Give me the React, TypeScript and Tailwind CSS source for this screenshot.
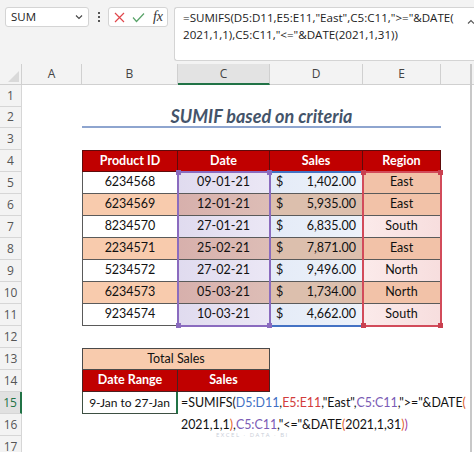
import React from "react";

const rows = [
  ["6234568", "09-01-21", "1,402.00", "East"],
  ["6234569", "12-01-21", "5,935.00", "East"],
  ["8234570", "27-01-21", "6,835.00", "South"],
  ["2234571", "25-02-21", "7,871.00", "East"],
  ["5234572", "27-02-21", "9,496.00", "North"],
  ["6234573", "05-03-21", "1,734.00", "North"],
  ["9234574", "10-03-21", "4,662.00", "South"],
];

const bodyRowStart = [
  "row-start-6",
  "row-start-7",
  "row-start-8",
  "row-start-9",
  "row-start-10",
  "row-start-11",
  "row-start-12",
];

const rowHeaderStart = [
  "row-start-2",
  "row-start-3",
  "row-start-4",
  "row-start-5",
  "row-start-6",
  "row-start-7",
  "row-start-8",
  "row-start-9",
  "row-start-10",
  "row-start-11",
  "row-start-12",
  "row-start-13",
  "row-start-14",
  "row-start-15",
  "row-start-16",
  "row-start-17",
  "row-start-18",
];

const eDark = [true, true, false, true, false, true, false];

function Handle({ pos, color }: { pos: string; color: string }) {
  return <div className={`absolute w-[5px] h-[5px] ${pos} ${color}`} />;
}

export default function App() {
  const cell = "font-['Lato',sans-serif] text-[12.5px] text-[#111] flex items-center border-b border-r border-[#5a5a5a]";
  return (
    <div className="w-[474px] h-[452px] overflow-hidden bg-white relative">
      {/* formula bar */}
      <div className="h-[64px] bg-[#f3f3f3] flex items-start pt-[7px] pl-[5px] font-['Open_Sans',sans-serif]">
        <div className="w-[84px] h-[20px] bg-white border border-[#d4d4d4] rounded-[3px] flex items-center justify-between pl-[5px] pr-[4px] text-[11.5px] text-[#222]">
          <span>SUM</span>
          <svg width="10" height="10" viewBox="0 0 10 10">
            <path d="M2 3.5 L5 6.5 L8 3.5" fill="none" stroke="#444" strokeWidth="1.1" />
          </svg>
        </div>
        <div className="w-[19px] h-[20px] flex flex-col items-center justify-center gap-[2px]">
          <div className="w-[2px] h-[2px] bg-[#555]" />
          <div className="w-[2px] h-[2px] bg-[#555]" />
          <div className="w-[2px] h-[2px] bg-[#555]" />
        </div>
        <div className="w-[60px] h-[20px] bg-white border border-[#d4d4d4] rounded-[3px] flex items-center justify-between pl-[5px] pr-[4px]">
          <svg width="11" height="11" viewBox="0 0 11 11">
            <path d="M1 1 L10 10 M10 1 L1 10" stroke="#e0474c" strokeWidth="1.2" />
          </svg>
          <svg width="13" height="11" viewBox="0 0 13 11">
            <path d="M1 5.5 L4.5 9.5 L12 1.5" fill="none" stroke="#5aa46a" strokeWidth="1.2" />
          </svg>
          <span className="font-['Liberation_Serif',serif] italic text-[14px] leading-none text-[#333]">fx</span>
        </div>
        <div className="ml-[6px] flex-1 h-[54px] bg-white border border-r-0 border-[#d4d4d4] rounded-l-[3px] pl-[8px] pt-[1px] text-[11.6px] leading-[17px] text-[#222] relative">
          <div>=SUMIFS(D5:D11,E5:E11,"East",C5:C11,"&gt;="&amp;DATE(</div>
          <div>2021,1,1),C5:C11,"&lt;="&amp;DATE(2021,1,31))</div>
          <svg className="absolute right-[-2px] top-[10px]" width="10" height="8" viewBox="0 0 10 8">
            <path d="M2 5.5 L5 2.5 L8 5.5" fill="none" stroke="#555" strokeWidth="1.1" />
          </svg>
        </div>
      </div>

      {/* sheet */}
      <div className="grid grid-cols-[22px_60px_96px_92px_93px_78px_29px_2px_1fr] grid-rows-[21px_22px_21px_22px_repeat(14,22px)] font-['Open_Sans',sans-serif]">
        {/* column headers */}
        <div className="col-start-1 row-start-1 bg-[#f3f3f3] border-r border-b border-[#d0d0d0] relative">
          <div className="absolute right-[2px] bottom-[2px] w-0 h-0 border-l-[11px] border-l-transparent border-b-[11px] border-b-[#d9d9d9]" />
        </div>
        <div className="col-start-2 row-start-1 bg-[#f3f3f3] border-r border-b border-[#d0d0d0] flex items-center justify-center text-[12px] text-[#444]">A</div>
        <div className="col-start-3 row-start-1 bg-[#f3f3f3] border-r border-b border-[#d0d0d0] flex items-center justify-center text-[12px] text-[#444]">B</div>
        <div className="col-start-4 row-start-1 bg-[#e3e3e3] border-r border-[#d0d0d0] border-b-2 border-b-[#217346] flex items-center justify-center text-[12px] text-[#444]">C</div>
        <div className="col-start-5 row-start-1 bg-[#f3f3f3] border-r border-b border-[#d0d0d0] flex items-center justify-center text-[12px] text-[#444]">D</div>
        <div className="col-start-6 row-start-1 bg-[#f3f3f3] border-r border-b border-[#d0d0d0] flex items-center justify-center text-[12px] text-[#444]">E</div>
        <div className="col-start-7 row-start-1 bg-[#f3f3f3] border-b border-[#d0d0d0]" />
        <div className="col-start-8 row-start-1 row-span-18 bg-[#c8c8c8]" />
        <div className="col-start-9 row-start-1 bg-[#f3f3f3] border-b border-[#d0d0d0]" />

        {/* row headers */}
        {rowHeaderStart.map((rs, i) =>
          i === 14 ? (
            <div key={i} className={`col-start-1 ${rs} bg-[#e1e1e1] border-b border-[#d6d6d6] border-r-2 border-r-[#217346] flex items-center justify-center text-[12px] text-[#217346]`}>
              {i + 1}
            </div>
          ) : (
            <div key={i} className={`col-start-1 ${rs} bg-[#f3f3f3] border-b border-r border-[#d6d6d6] flex items-center justify-center text-[12px] text-[#555]`}>
              {i + 1}
            </div>
          )
        )}

        {/* title */}
        <div className="col-start-3 col-span-4 row-start-3 border-b-2 border-[#8ea5cf] flex items-center justify-center font-['Lato',sans-serif] italic font-bold text-[18px] text-[#44546a]">
          SUMIF based on criteria
        </div>

        {/* table header */}
        <div className="col-start-3 row-start-5 bg-[#c00000] border border-[#5e0b0b] flex items-center justify-center font-['Lato',sans-serif] font-bold text-[12.5px] text-white">Product ID</div>
        <div className="col-start-4 row-start-5 bg-[#c00000] border-y border-r border-[#5e0b0b] flex items-center justify-center font-['Lato',sans-serif] font-bold text-[12.5px] text-white">Date</div>
        <div className="col-start-5 row-start-5 bg-[#c00000] border-y border-r border-[#5e0b0b] flex items-center justify-center font-['Lato',sans-serif] font-bold text-[12.5px] text-white">Sales</div>
        <div className="col-start-6 row-start-5 bg-[#c00000] border-y border-r border-[#5e0b0b] flex items-center justify-center font-['Lato',sans-serif] font-bold text-[12.5px] text-white">Region</div>

        {/* body */}
        {rows.map((r, i) => {
          const peach = i % 2 === 1;
          const rs = bodyRowStart[i];
          return (
            <React.Fragment key={i}>
              <div className={`col-start-3 ${rs} ${cell} border-l justify-center ${peach ? "bg-[#f8cbad]" : "bg-white"}`}>{r[0]}</div>
              <div className={`col-start-4 ${rs} ${cell} justify-center ${peach ? "bg-linear-to-r from-[#d7b0ac] to-[#ddbdb6]" : "bg-linear-to-r from-[#e0dbef] to-[#ebe7f5]"}`}>{r[1]}</div>
              <div className={`col-start-5 ${rs} ${cell} justify-between pl-[6px] pr-[6px] ${peach ? "bg-[#dcbfad]" : "bg-linear-to-r from-[#e4ebf7] to-[#edf2fa]"}`}>
                <span>$</span>
                <span>{r[2]}</span>
              </div>
              <div className={`col-start-6 ${rs} ${cell} justify-center ${eDark[i] ? "bg-[#f2c2a8]" : "bg-linear-to-r from-[#fbeaea] to-[#f7dede]"}`}>{r[3]}</div>
            </React.Fragment>
          );
        })}

        {/* range highlights */}
        <div className="col-start-5 row-start-6 row-span-7 -m-px border-2 border-[#4472c4] pointer-events-none" />
        <div className="col-start-4 row-start-6 row-span-7 -m-px border-2 border-[#8a6bbf] relative pointer-events-none">
          <Handle pos="-left-[3px] -top-[3px]" color="bg-[#8a6bbf]" />
          <Handle pos="-right-[3px] -top-[3px]" color="bg-[#8a6bbf]" />
          <Handle pos="-left-[3px] -bottom-[3px]" color="bg-[#8a6bbf]" />
          <Handle pos="-right-[3px] -bottom-[3px]" color="bg-[#8a6bbf]" />
        </div>
        <div className="col-start-6 row-start-6 row-span-7 -m-px border-2 border-[#d24b5a] relative pointer-events-none">
          <Handle pos="-left-[3px] -top-[3px]" color="bg-[#c9404f]" />
          <Handle pos="-right-[3px] -top-[3px]" color="bg-[#c9404f]" />
          <Handle pos="-left-[3px] -bottom-[3px]" color="bg-[#c9404f]" />
          <Handle pos="-right-[3px] -bottom-[3px]" color="bg-[#c9404f]" />
        </div>

        {/* total sales table */}
        <div className="col-start-3 col-span-2 row-start-14 bg-[#f8cbad] border border-[#4a4a4a] flex items-center justify-center font-['Lato',sans-serif] text-[12.5px] text-[#111]">Total Sales</div>
        <div className="col-start-3 row-start-15 bg-[#c00000] border-x border-b border-[#4a2020] flex items-center justify-center font-['Lato',sans-serif] font-bold text-[12.5px] text-white">Date Range</div>
        <div className="col-start-4 row-start-15 bg-[#c00000] border-r border-b border-[#4a2020] flex items-center justify-center font-['Lato',sans-serif] font-bold text-[12.5px] text-white">Sales</div>
        <div className="col-start-3 row-start-16 bg-white border-l border-b border-[#3d4f42] border-r-2 border-r-[#217346] flex items-center justify-center font-['Lato',sans-serif] text-[12px] text-[#111]">9-Jan to 27-Jan</div>

        {/* in-cell formula */}
        <div className="col-start-4 col-span-5 row-start-16 row-span-2 pl-[3px] font-['Lato',sans-serif] text-[12.4px] text-[#111] whitespace-nowrap relative">
          <div className="h-[22px] flex items-center">
            <span>=SUMIFS(</span>
            <span className="text-[#3f6fc4]">D5:D11</span>
            <span>,</span>
            <span className="text-[#d23c3c]">E5:E11</span>
            <span>,"East",</span>
            <span className="text-[#7a5bb5]">C5:C11</span>
            <span>,"&gt;="&amp;DATE</span>
            <span className="text-[#e0602a]">(</span>
          </div>
          <div className="h-[22px] flex items-center">
            <span>2021,1,1</span>
            <span className="text-[#e0602a]">)</span>
            <span>,</span>
            <span className="text-[#7a5bb5]">C5:C11</span>
            <span>,"&lt;="&amp;DATE</span>
            <span className="text-[#e0602a]">(</span>
            <span>2021,1,31</span>
            <span className="text-[#e0602a]">)</span>
            <span className="text-[#a040a0]">)</span>
          </div>
          <div className="absolute left-[38px] top-[39px] text-[6px] tracking-[1.5px] text-[#c9ced8] font-['Open_Sans',sans-serif]">
            EXCEL · DATA · BI
          </div>
        </div>
      </div>
    </div>
  );
}
